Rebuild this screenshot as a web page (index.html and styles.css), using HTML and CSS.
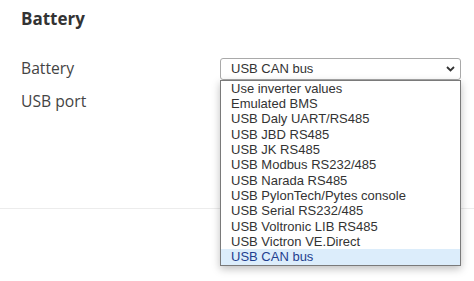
FILE: index.html
```html
<!DOCTYPE html>
<html>
<head>
<meta charset="utf-8">
<link rel="stylesheet" href="styles.css">
</head>
<body>
<div class="page">
<div class="card">
  <h2 class="title">Battery</h2>
  <div class="form">
    <div class="label">Battery</div>
    <div class="field">
      <div class="select">
        <span class="select-text">USB CAN bus</span>
        <svg class="chevron" width="9" height="6" viewBox="0 0 9 6"><path d="M1 1 L4.5 4.5 L8 1" fill="none" stroke="#333" stroke-width="1.8"/></svg>
      </div>
      <ul class="options">
        <li>Use inverter values</li>
        <li>Emulated BMS</li>
        <li>USB Daly UART/RS485</li>
        <li>USB JBD RS485</li>
        <li>USB JK RS485</li>
        <li>USB Modbus RS232/485</li>
        <li>USB Narada RS485</li>
        <li>USB PylonTech/Pytes console</li>
        <li>USB Serial RS232/485</li>
        <li>USB Voltronic LIB RS485</li>
        <li>USB Victron VE.Direct</li>
        <li class="selected">USB CAN bus</li>
      </ul>
    </div>
    <div class="label">USB port</div>
    <div class="field"></div>
  </div>
</div>
</div>
</body>
</html>
```
FILE: styles.css
```css
html, body {
  margin: 0;
  padding: 0;
  background: #fff;
}
body {
  font-family: "Open Sans", "DejaVu Sans", sans-serif;
  color: #3a3a3a;
}
.page {
  min-height: 281px;
}
.card {
  padding: 8px 21px 90px;
  border-bottom: 1px solid #ececec;
}
.title {
  margin: 0;
  font-size: 17px;
  line-height: 22px;
  font-weight: 700;
  color: #333;
}
.form {
  margin-top: 22px;
  display: grid;
  grid-template-columns: 199px 241px;
  grid-auto-rows: 33px;
  align-items: center;
}
.label {
  font-size: 15.7px;
  line-height: 20px;
  margin-top: -2px;
  color: #444;
}
.field {
  position: relative;
  height: 22px;
}
.select {
  box-sizing: border-box;
  height: 22px;
  border: 1px solid #a9a9a9;
  border-radius: 3px;
  display: flex;
  align-items: center;
  justify-content: space-between;
  padding: 0 5px 0 10px;
  font-family: "Liberation Sans", Arial, sans-serif;
  font-size: 13px;
  color: #333;
  background: #fff;
}
.chevron {
  margin-top: 1px;
}
.options {
  position: absolute;
  top: 100%;
  left: 0;
  width: 241px;
  box-sizing: border-box;
  margin: 0;
  padding: 0;
  list-style: none;
  background: #fff;
  border: 1px solid #7a7a7a;
  box-shadow: 0 3px 8px rgba(0,0,0,0.25);
  font-family: "Liberation Sans", Arial, sans-serif;
  font-size: 13px;
  color: #333;
  z-index: 2;
}
.options li {
  height: 15.35px;
  line-height: 15.35px;
  padding-left: 10px;
  white-space: nowrap;
}
.options li.selected {
  background: #dcedfb;
  color: #1f3f8f;
}
```
